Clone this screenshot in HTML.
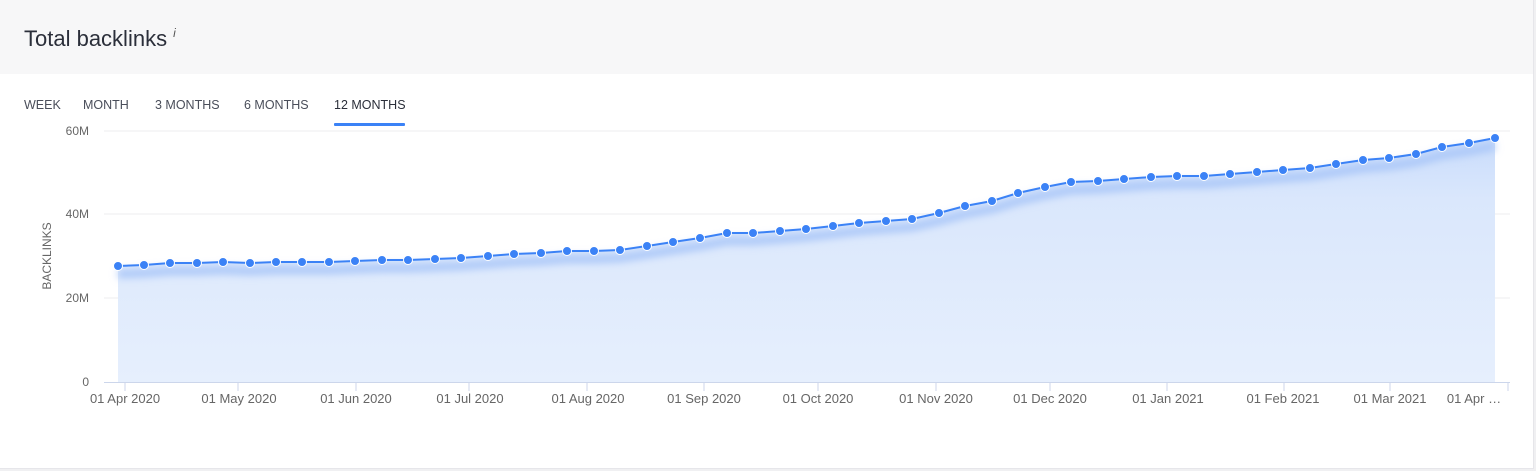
<!DOCTYPE html>
<html><head><meta charset="utf-8"><style>
body{margin:0;width:1536px;height:471px;background:#f0f0f2;font-family:"Liberation Sans",sans-serif;overflow:hidden}
.card{position:absolute;left:0;top:0;width:1533px;height:468px;background:#fff;border-right:1px solid #e6e6ea;border-bottom:1px solid #e6e6ea}
.hd{height:74px;background:#f7f7f8;position:relative}
.hd h1{margin:0;position:absolute;left:24px;top:26px;font-size:22px;font-weight:normal;color:#2b2f3a}
.hd i{font-size:12px;color:#555;margin-left:6px;vertical-align:top}
.tabs{position:absolute;top:98px;left:24px;font-size:12.5px;color:#4a4e5a}
.tabs span{position:absolute;white-space:nowrap}
.ul{position:absolute;left:334px;top:123px;width:71px;height:3px;background:#3b82f6;border-radius:1px}
svg{position:absolute;left:0;top:0}
</style></head><body><div class="card">
<div class="hd"><h1>Total backlinks<i>i</i></h1></div>
<div class="tabs"><span style="left:0">WEEK</span><span style="left:59px">MONTH</span><span style="left:131px">3 MONTHS</span><span style="left:220px">6 MONTHS</span><span style="left:310px;color:#2b2f3a">12 MONTHS</span></div>
<div class="ul"></div>
<svg width="1536" height="471" font-family="Liberation Sans, sans-serif">
<defs><linearGradient id="g" x1="0" y1="0" x2="0" y2="1"><stop offset="0" stop-color="#c9dcfb"/><stop offset="0.25" stop-color="#dae7fc"/><stop offset="1" stop-color="#e6effd"/></linearGradient>
<filter id="b" x="-5%" y="-50%" width="110%" height="200%"><feGaussianBlur stdDeviation="4"/></filter></defs>
<g stroke="#ececef" stroke-width="1"><line x1="104" y1="131" x2="1510" y2="131"/><line x1="104" y1="214" x2="1510" y2="214"/><line x1="104" y1="298" x2="1510" y2="298"/></g>
<g fill="#666" font-size="12" text-anchor="end"><text x="89" y="135">60M</text><text x="89" y="218">40M</text><text x="89" y="302">20M</text><text x="89" y="386">0</text></g>
<text transform="translate(51,256) rotate(-90)" text-anchor="middle" font-size="12" fill="#666">BACKLINKS</text>
<polygon fill="url(#g)" points="118,382 118,266 144,265 170,263 197,263 223,262 250,263 276,262 302,262 329,262 355,261 382,260 408,260 435,259 461,258 488,256 514,254 541,253 567,251 594,251 620,250 647,246 673,242 700,238 727,233 753,233 780,231 806,229 833,226 859,223 886,221 912,219 939,213 965,206 992,201 1018,193 1045,187 1071,182 1098,181 1124,179 1151,177 1177,176 1204,176 1230,174 1257,172 1283,170 1310,168 1336,164 1363,160 1389,158 1416,154 1442,147 1469,143 1495,138 1495,382"/>
<polyline fill="none" stroke="#a9c6f8" stroke-width="8" filter="url(#b)" transform="translate(0,8)" points="118,266 144,265 170,263 197,263 223,262 250,263 276,262 302,262 329,262 355,261 382,260 408,260 435,259 461,258 488,256 514,254 541,253 567,251 594,251 620,250 647,246 673,242 700,238 727,233 753,233 780,231 806,229 833,226 859,223 886,221 912,219 939,213 965,206 992,201 1018,193 1045,187 1071,182 1098,181 1124,179 1151,177 1177,176 1204,176 1230,174 1257,172 1283,170 1310,168 1336,164 1363,160 1389,158 1416,154 1442,147 1469,143 1495,138"/>
<line x1="104" y1="382.5" x2="1510" y2="382.5" stroke="#ccd6eb"/>
<g stroke="#ccd6eb"><line x1="125" y1="383" x2="125" y2="391"/><line x1="238" y1="383" x2="238" y2="391"/><line x1="356" y1="383" x2="356" y2="391"/><line x1="469" y1="383" x2="469" y2="391"/><line x1="587" y1="383" x2="587" y2="391"/><line x1="704" y1="383" x2="704" y2="391"/><line x1="818" y1="383" x2="818" y2="391"/><line x1="936" y1="383" x2="936" y2="391"/><line x1="1050" y1="383" x2="1050" y2="391"/><line x1="1167" y1="383" x2="1167" y2="391"/><line x1="1284" y1="383" x2="1284" y2="391"/><line x1="1390" y1="383" x2="1390" y2="391"/><line x1="1508" y1="383" x2="1508" y2="391"/></g>
<g fill="#666" font-size="13" text-anchor="middle"><text x="125" y="403">01 Apr 2020</text><text x="239" y="403">01 May 2020</text><text x="356" y="403">01 Jun 2020</text><text x="470" y="403">01 Jul 2020</text><text x="588" y="403">01 Aug 2020</text><text x="704" y="403">01 Sep 2020</text><text x="818" y="403">01 Oct 2020</text><text x="936" y="403">01 Nov 2020</text><text x="1050" y="403">01 Dec 2020</text><text x="1168" y="403">01 Jan 2021</text><text x="1283" y="403">01 Feb 2021</text><text x="1390" y="403">01 Mar 2021</text><text x="1474" y="403">01 Apr …</text></g>
<polyline fill="none" stroke="#3b82f6" stroke-width="2" points="118,266 144,265 170,263 197,263 223,262 250,263 276,262 302,262 329,262 355,261 382,260 408,260 435,259 461,258 488,256 514,254 541,253 567,251 594,251 620,250 647,246 673,242 700,238 727,233 753,233 780,231 806,229 833,226 859,223 886,221 912,219 939,213 965,206 992,201 1018,193 1045,187 1071,182 1098,181 1124,179 1151,177 1177,176 1204,176 1230,174 1257,172 1283,170 1310,168 1336,164 1363,160 1389,158 1416,154 1442,147 1469,143 1495,138"/>
<g fill="#3b82f6" stroke="#fff" stroke-width="1">
<circle cx="118" cy="266" r="4.5"/><circle cx="144" cy="265" r="4.5"/><circle cx="170" cy="263" r="4.5"/><circle cx="197" cy="263" r="4.5"/><circle cx="223" cy="262" r="4.5"/><circle cx="250" cy="263" r="4.5"/><circle cx="276" cy="262" r="4.5"/><circle cx="302" cy="262" r="4.5"/><circle cx="329" cy="262" r="4.5"/><circle cx="355" cy="261" r="4.5"/><circle cx="382" cy="260" r="4.5"/><circle cx="408" cy="260" r="4.5"/><circle cx="435" cy="259" r="4.5"/><circle cx="461" cy="258" r="4.5"/><circle cx="488" cy="256" r="4.5"/><circle cx="514" cy="254" r="4.5"/><circle cx="541" cy="253" r="4.5"/><circle cx="567" cy="251" r="4.5"/><circle cx="594" cy="251" r="4.5"/><circle cx="620" cy="250" r="4.5"/><circle cx="647" cy="246" r="4.5"/><circle cx="673" cy="242" r="4.5"/><circle cx="700" cy="238" r="4.5"/><circle cx="727" cy="233" r="4.5"/><circle cx="753" cy="233" r="4.5"/><circle cx="780" cy="231" r="4.5"/><circle cx="806" cy="229" r="4.5"/><circle cx="833" cy="226" r="4.5"/><circle cx="859" cy="223" r="4.5"/><circle cx="886" cy="221" r="4.5"/><circle cx="912" cy="219" r="4.5"/><circle cx="939" cy="213" r="4.5"/><circle cx="965" cy="206" r="4.5"/><circle cx="992" cy="201" r="4.5"/><circle cx="1018" cy="193" r="4.5"/><circle cx="1045" cy="187" r="4.5"/><circle cx="1071" cy="182" r="4.5"/><circle cx="1098" cy="181" r="4.5"/><circle cx="1124" cy="179" r="4.5"/><circle cx="1151" cy="177" r="4.5"/><circle cx="1177" cy="176" r="4.5"/><circle cx="1204" cy="176" r="4.5"/><circle cx="1230" cy="174" r="4.5"/><circle cx="1257" cy="172" r="4.5"/><circle cx="1283" cy="170" r="4.5"/><circle cx="1310" cy="168" r="4.5"/><circle cx="1336" cy="164" r="4.5"/><circle cx="1363" cy="160" r="4.5"/><circle cx="1389" cy="158" r="4.5"/><circle cx="1416" cy="154" r="4.5"/><circle cx="1442" cy="147" r="4.5"/><circle cx="1469" cy="143" r="4.5"/><circle cx="1495" cy="138" r="4.5"/>
</g>
</svg>
</div></body></html>
